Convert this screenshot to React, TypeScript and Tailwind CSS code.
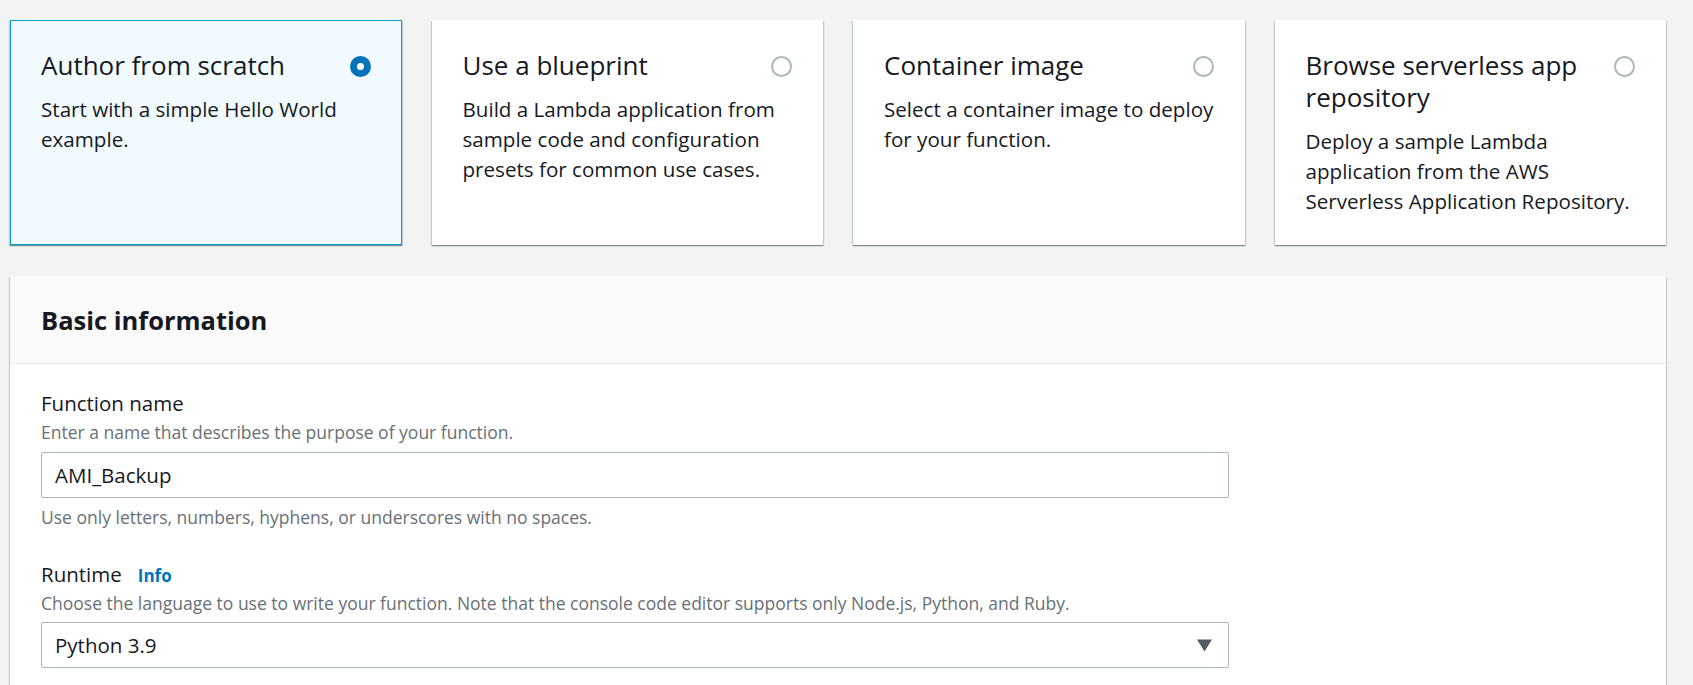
import React from "react";

type Option = {
  key: string;
  title: string;
  description: string;
};

const OPTIONS: Option[] = [
  {
    key: "scratch",
    title: "Author from scratch",
    description: "Start with a simple Hello World example.",
  },
  {
    key: "blueprint",
    title: "Use a blueprint",
    description:
      "Build a Lambda application from sample code and configuration presets for common use cases.",
  },
  {
    key: "container",
    title: "Container image",
    description: "Select a container image to deploy for your function.",
  },
  {
    key: "serverless",
    title: "Browse serverless app repository",
    description:
      "Deploy a sample Lambda application from the AWS Serverless Application Repository.",
  },
];

const cardShadow =
  "shadow-[0_1px_1px_0_rgba(0,28,36,0.3),1px_1px_1px_0_rgba(0,28,36,0.15),-1px_1px_1px_0_rgba(0,28,36,0.15)]";

function Radio({ checked }: { checked: boolean }) {
  return (
    <span
      className={`mt-[7px] mr-[4px] block h-[21px] w-[21px] shrink-0 rounded-full ${
        checked
          ? "border-[7px] border-[#0073bb] bg-white"
          : "border-2 border-[#aab7b8] bg-white"
      }`}
    />
  );
}

function OptionCard({ option, selected }: { option: Option; selected: boolean }) {
  return (
    <div
      className={`h-[225px] border pl-[30px] pr-[26px] pt-[28px] ${cardShadow} ${
        selected ? "border-[#00a1c9] bg-[#f1faff]" : "border-transparent bg-white"
      }`}
    >
      <div className="flex items-start justify-between gap-4">
        <h3 className="text-[26px] leading-[32px] font-normal text-[#16191f]">
          {option.title}
        </h3>
        <Radio checked={selected} />
      </div>
      <p className="mt-[13px] text-[20.6px] leading-[30px] text-[#16191f]">
        {option.description}
      </p>
    </div>
  );
}

function CaretDown() {
  return (
    <svg width="15" height="13" viewBox="0 0 15 13" className="shrink-0">
      <path d="M0 0.5 H15 L7.5 12.5 Z" fill="#545b64" />
    </svg>
  );
}

export default function App() {
  return (
    <div className="min-h-screen bg-[#f2f3f3] font-['Open_Sans',sans-serif] text-[#16191f]">
      <div className="ml-[10px] w-[1656px] pt-[20px] pb-10">
        <div className="grid grid-cols-4 gap-[30px]">
          {OPTIONS.map((o) => (
            <OptionCard key={o.key} option={o} selected={o.key === "scratch"} />
          ))}
        </div>

        <div className={`mt-[31px] bg-white ${cardShadow}`}>
          <div className="flex h-[88px] items-center border-b border-[#eaeded] bg-[#fafafa] px-[31px]">
            <h2 className="text-[25.5px] font-bold leading-[32px]">Basic information</h2>
          </div>

          <div className="px-[31px] pt-[25px] pb-[40px]">
            {/* Function name */}
            <div>
              <label className="block text-[20.5px] leading-[28px]">Function name</label>
              <p className="mt-[3px] text-[17.5px] leading-[24px] text-[#687078]">
                Enter a name that describes the purpose of your function.
              </p>
              <div className="mt-[8px] flex h-[46px] w-[1188px] items-center rounded-[2px] border border-[#aab7b8] px-[13px]">
                <span className="text-[20.5px] leading-[28px]">AMI_Backup</span>
              </div>
              <p className="mt-[7px] text-[17.5px] leading-[24px] text-[#687078]">
                Use only letters, numbers, hyphens, or underscores with no spaces.
              </p>
            </div>

            {/* Runtime */}
            <div className="mt-[31px]">
              <div className="flex items-baseline">
                <label className="text-[20.5px] leading-[28px]">Runtime</label>
                <a className="ml-4 text-[17px] font-bold leading-[24px] text-[#0073bb]">
                  Info
                </a>
              </div>
              <p className="mt-[3px] text-[17.5px] leading-[24px] text-[#687078]">
                Choose the language to use to write your function. Note that the console code
                editor supports only Node.js, Python, and Ruby.
              </p>
              <div className="mt-[7px] flex h-[46px] w-[1188px] items-center justify-between rounded-[2px] border border-[#aab7b8] pl-[13px] pr-[16px]">
                <span className="text-[20.5px] leading-[28px]">Python 3.9</span>
                <CaretDown />
              </div>
            </div>

            <div className="h-[120px]" />
          </div>
        </div>
      </div>
    </div>
  );
}
